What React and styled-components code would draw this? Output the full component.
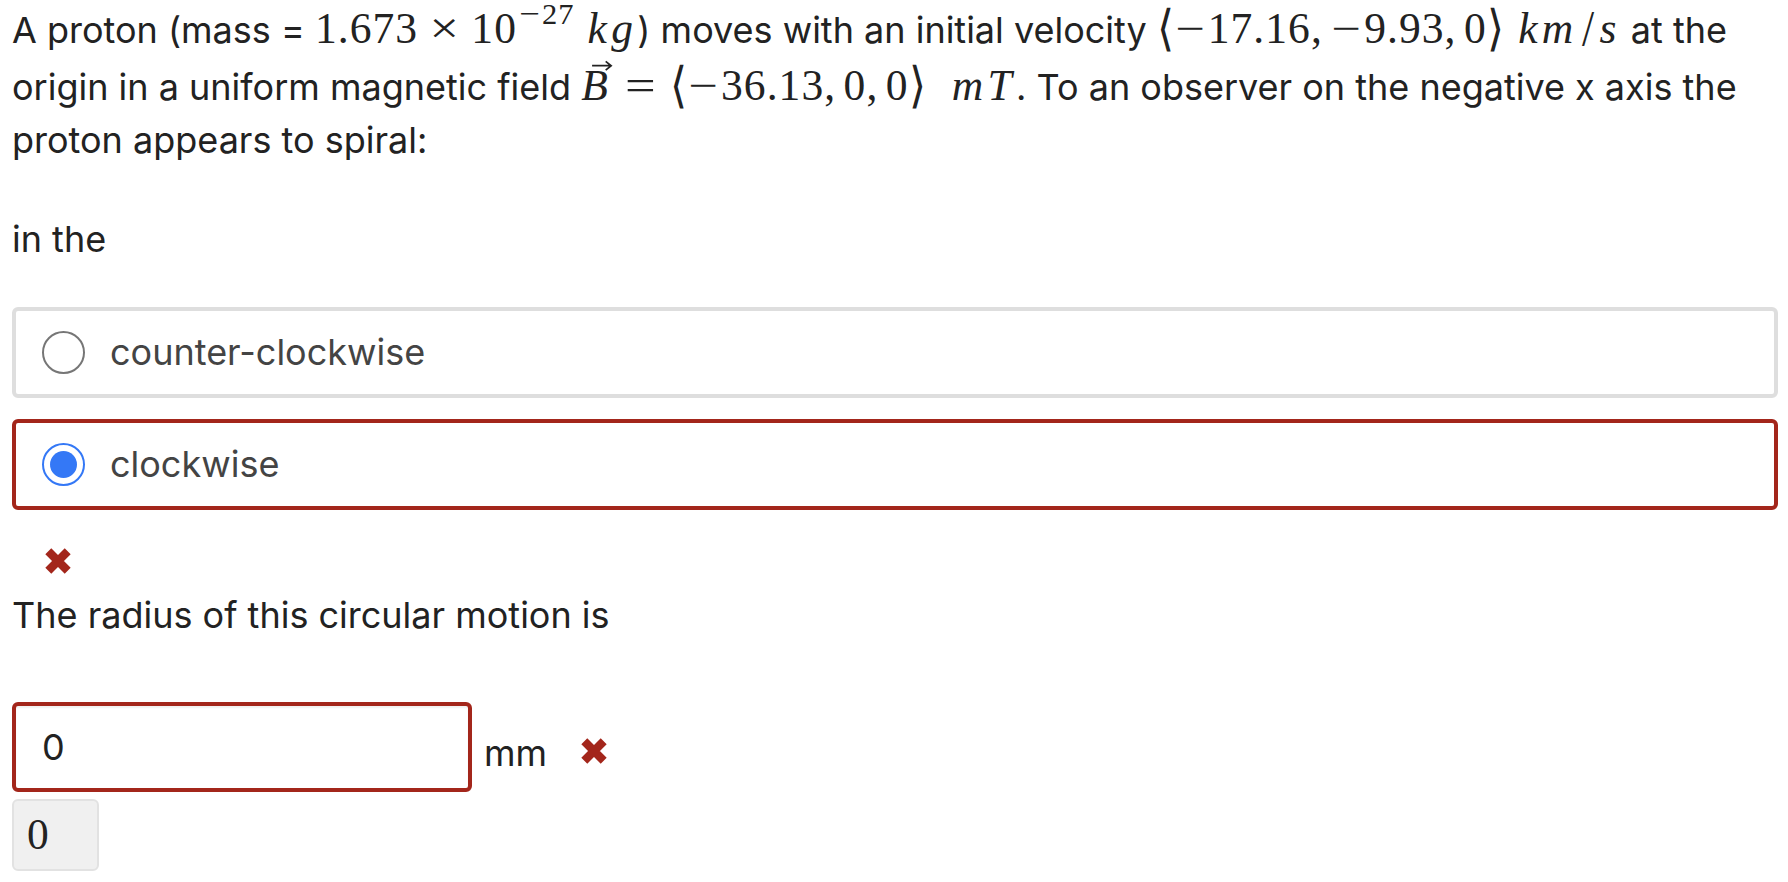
import React from "react";
import styled, { createGlobalStyle } from "styled-components";

const GlobalStyle = createGlobalStyle`
  html, body { margin: 0; padding: 0; background: #fff; }
  body {
    font-family: Inter, "Noto Sans", sans-serif;
    color: #222;
    -webkit-font-smoothing: antialiased;
  }
  * { box-sizing: border-box; }
`;

const Page = styled.main`
  padding: 4px 10px 0 12px;
  font-size: 36px;
  line-height: 53px;
`;

const Prompt = styled.p`
  margin: 0 0 46px;
  white-space: nowrap;
`;

const Lead = styled.p`
  margin: 0 0 41px;
`;

const MathText = styled.span`
  font-family: "Liberation Serif", "Times New Roman", serif;
  font-size: 1.21em;
  line-height: 1;
  letter-spacing: 0.024em;
  white-space: nowrap;
`;

const Var = styled.i`
  font-style: italic;
  letter-spacing: 0.1em;
`;

const Glyph = styled.span`
  display: inline-block;
  width: ${(p) => p.$w || "0.778em"};
  text-align: center;
  transform: scale(${(p) => p.$sx || 1}, ${(p) => p.$sy || 1});
`;

const Bin = styled(Glyph)`
  margin: 0 0.222em;
`;

const Rel = styled(Glyph)`
  margin: 0 0.2778em;
`;

const Punct = styled.span`
  display: inline-block;
  width: 0.278em;
  margin-right: 0.1667em;
`;

const Sup = styled.span`
  font-size: 0.7em;
  position: relative;
  top: -0.62em;
  margin-left: 0.04em;
`;

const Delim = styled.span`
  display: inline-block;
  width: 0.389em;
  text-align: center;
  font-family: "DejaVu Sans", "Liberation Serif", serif;
  font-weight: 200;
  transform: scaleY(1.12);
`;

const Unit = styled.span`
  margin-left: ${(p) => p.$gap || "0.333em"};
`;

const VecWrap = styled.span`
  display: inline-block;
  position: relative;
  padding-top: 7px;
  line-height: 1;
`;

const VecArrow = styled.svg`
  position: absolute;
  left: 0.22em;
  top: 2px;
  width: 0.5em;
  height: 0.26em;
  overflow: visible;
`;

const OptionList = styled.div`
  display: flex;
  flex-direction: column;
  gap: 21px;
`;

const Option = styled.label`
  display: flex;
  align-items: center;
  height: 91px;
  padding-left: 26px;
  border: 4px solid ${(p) => (p.$wrong ? "#a3261b" : "#dedede")};
  border-radius: 6px;
  color: #444;
  cursor: pointer;
`;

const Radio = styled.span`
  flex-shrink: 0;
  width: 43px;
  height: 43px;
  margin-right: 25px;
  border-radius: 50%;
  border: 2px solid ${(p) => (p.$checked ? "#3478f6" : "#767676")};
  display: flex;
  align-items: center;
  justify-content: center;

  &::after {
    content: "";
    display: ${(p) => (p.$checked ? "block" : "none")};
    width: 27px;
    height: 27px;
    border-radius: 50%;
    background: #3478f6;
  }
`;

const MarkRow = styled.div`
  height: 30px;
  margin: 36px 0 13px 31px;
  display: flex;
`;

const CrossSvg = styled.svg`
  width: 30px;
  height: 30px;
  flex-shrink: 0;
  margin: ${(p) => p.$margin || "0"};
`;

const Question = styled.p`
  margin: 0;
`;

const InputRow = styled.div`
  display: flex;
  align-items: flex-start;
  margin-top: 60px;
`;

const AnswerInput = styled.input`
  width: 460px;
  height: 90px;
  padding: 0 26px;
  border: 4px solid #a3261b;
  border-radius: 6px;
  box-shadow: inset 0 2px 2px rgba(0, 0, 0, 0.06);
  font: inherit;
  font-size: 36px;
  color: #222;
  background: #fff;
  outline: none;
`;

const UnitLabel = styled.span`
  margin: 25px 0 0 12px;
  line-height: 53px;
`;

const Preview = styled.div`
  margin-top: 7px;
  width: 87px;
  height: 72px;
  padding-left: 13px;
  display: flex;
  align-items: center;
  background: #f0f0f0;
  border: 2px solid #e2e2e2;
  border-radius: 6px;
  font-family: "Liberation Serif", "Times New Roman", serif;
  font-size: 43.5px;
  line-height: 1;
`;

function Cross({ margin }) {
  return (
    <CrossSvg viewBox="0 0 30 30" $margin={margin} aria-label="incorrect">
      <path
        d="M5.3 5.3 L24.7 24.7 M24.7 5.3 L5.3 24.7"
        stroke="#a3261b"
        strokeWidth="8.4"
        strokeLinecap="butt"
        strokeLinejoin="round"
        fill="none"
      />
    </CrossSvg>
  );
}

const Minus = () => <Glyph $sx={1.2}>−</Glyph>;

export default function App() {
  return (
    <>
      <GlobalStyle />
      <Page>
        <Prompt>
          A proton (mass ={" "}
          <MathText>
            1.673<Bin $sx={1.2}>×</Bin>10
            <Sup>
              <Minus />
              27
            </Sup>
            <Unit $gap="0.3em">
              <Var>kg</Var>
            </Unit>
          </MathText>
          ) moves with an initial velocity{" "}
          <MathText>
            <Delim>⟨</Delim>
            <Minus />
            17.16<Punct>,</Punct>
            <Minus />
            9.93<Punct>,</Punct>0<Delim>⟩</Delim>
            <Unit>
              <Var>km</Var>
              <Glyph $w="0.5em" $sy={1.15}>
                /
              </Glyph>
              <Var>s</Var>
            </Unit>
          </MathText>{" "}
          at the
          <br />
          origin in a uniform magnetic field{" "}
          <MathText>
            <VecWrap>
              <Var>B</Var>
              <VecArrow viewBox="0 0 20 10">
                <path
                  d="M1 6 H18 M13.5 2 L18.5 6 L13.5 10"
                  stroke="#222"
                  strokeWidth="1.6"
                  fill="none"
                />
              </VecArrow>
            </VecWrap>
            <Rel $sx={1.25}>=</Rel>
            <Delim>⟨</Delim>
            <Minus />
            36.13<Punct>,</Punct>0<Punct>,</Punct>0<Delim>⟩</Delim>
            <Unit $gap="0.6em">
              <Var>mT</Var>
            </Unit>
          </MathText>
          . To an observer on the negative x axis the
          <br />
          proton appears to spiral:
        </Prompt>

        <Lead>in the</Lead>

        <OptionList>
          <Option>
            <Radio />
            counter-clockwise
          </Option>
          <Option $wrong>
            <Radio $checked />
            clockwise
          </Option>
        </OptionList>

        <MarkRow>
          <Cross />
        </MarkRow>

        <Question>The radius of this circular motion is</Question>

        <InputRow>
          <AnswerInput type="text" value="0" readOnly />
          <UnitLabel>mm</UnitLabel>
          <Cross margin="34px 0 0 32px" />
        </InputRow>

        <Preview>0</Preview>
      </Page>
    </>
  );
}
